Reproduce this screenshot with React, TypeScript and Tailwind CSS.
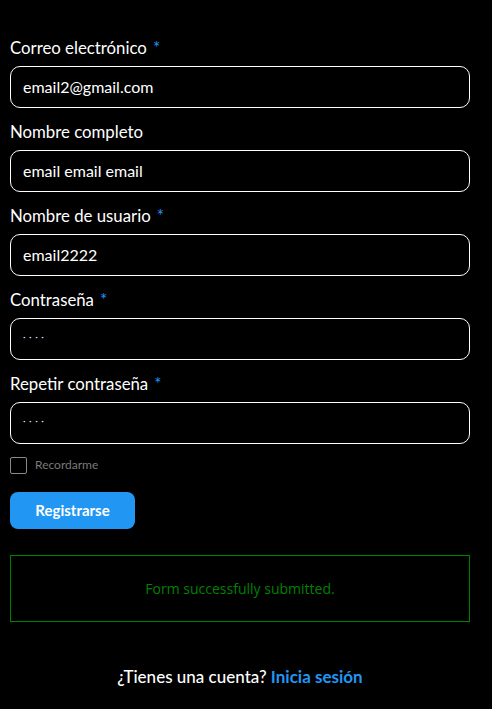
import React from "react";

const font = { fontFamily: "Lato, 'Noto Sans', sans-serif" };

function Field({ label, required, value, dots }: { label: string; required?: boolean; value: string; dots?: boolean }) {
  return (
    <div className="flex flex-col">
      <label className="text-[16.8px] leading-6 text-white pt-[3px] mb-[6px]">
        {label}
        {required && <span className="text-[#2196f3] ml-[6px] text-[17px]">*</span>}
      </label>
      <div className="h-[42px] border border-white rounded-[10px] px-3 flex items-center text-[16px] text-white">
        {dots ? (
          <span className="text-[10px] tracking-[3.5px] text-[#dde6ff] -mt-[6px]">····</span>
        ) : (
          value
        )}
      </div>
    </div>
  );
}

export default function App() {
  return (
    <div className="min-h-[709px] w-full bg-black" style={font}>
      <div className="px-[10px] pr-[22px] pt-[33px] flex flex-col">
        <div className="flex flex-col gap-[9px]">
          <Field label="Correo electrónico" required value="email2@gmail.com" />
          <Field label="Nombre completo" value="email email email" />
          <Field label="Nombre de usuario" required value="email2222" />
          <Field label="Contraseña" required value="" dots />
          <Field label="Repetir contraseña" required value="" dots />
        </div>
        <div className="flex items-center gap-2 mt-3">
          <div className="w-[17px] h-[17px] border border-[#8a8a8a] rounded-[2px]" />
          <span className="text-[12px] text-[#7a7a7a]">Recordarme</span>
        </div>
        <button className="mt-[18px] w-[125px] h-[37px] bg-[#2196f3] rounded-[8px] text-white font-bold text-[15px]">
          Registrarse
        </button>
        <div
          className="mt-[26px] h-[67px] border border-[#008000] flex items-center justify-center text-[14px] text-[#008000]"
          style={{ fontFamily: "'Open Sans', 'Noto Sans', sans-serif" }}
        >
          Form successfully submitted.
        </div>
        <div className="mt-[42px] text-center text-[17px] text-white font-medium">
          ¿Tienes una cuenta? <span className="text-[#2196f3] font-bold">Inicia sesión</span>
        </div>
      </div>
    </div>
  );
}
